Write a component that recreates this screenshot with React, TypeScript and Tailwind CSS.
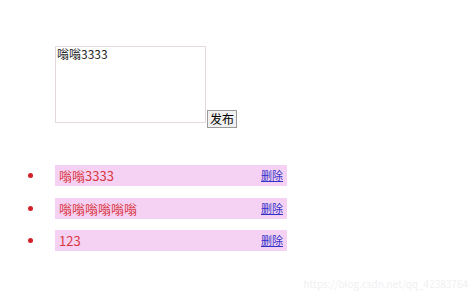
import React, { useState } from 'react';

const font = { fontFamily: '"Noto Sans CJK SC", "Noto Sans", sans-serif' };

export default function App() {
  const [text, setText] = useState('嗡嗡3333');
  const [items, setItems] = useState<string[]>(['嗡嗡3333', '嗡嗡嗡嗡嗡嗡', '123']);

  return (
    <div className="relative w-[474px] h-[300px] bg-white overflow-hidden" style={font}>
      <div className="flex items-end pt-[46px] pl-[55px]">
        <textarea
          value={text}
          onChange={(e) => setText(e.target.value)}
          className="w-[151px] h-[77px] border border-[#e6d6de] px-[1px] py-0 text-[12px] leading-[14px] text-[#222] resize-none outline-none"
        />
        <button
          onClick={() => setItems([...items, text])}
          className="ml-[1px] -mb-[5px] h-[18px] px-[2px] border border-[#9a9a9a] bg-[#f0f0f0] text-[12px] leading-[14px] text-black"
        >
          发布
        </button>
      </div>
      <ul className="mt-[42px] flex flex-col gap-[11.5px] pl-[28px]">
        {items.map((item, i) => (
          <li key={i} className="flex items-center">
            <span className="w-[5px] h-[5px] rounded-full bg-[#d21f2a] mr-[22px]" />
            <div className="w-[232px] h-[21px] bg-[#f5d2f3] flex items-center justify-between pl-[4px] pr-[4px]">
              <span className="text-[13px] text-[#d9363e] leading-none">{item}</span>
              <a
                href="#"
                onClick={(e) => {
                  e.preventDefault();
                  setItems(items.filter((_, j) => j !== i));
                }}
                className="text-[11px] text-[#3232c8] underline leading-none"
              >
                删除
              </a>
            </div>
          </li>
        ))}
      </ul>
      <div className="absolute right-[6px] bottom-[9px] text-[10px] text-[#f0f0f0]">
        https://blog.csdn.net/qq_42383764
      </div>
    </div>
  );
}
